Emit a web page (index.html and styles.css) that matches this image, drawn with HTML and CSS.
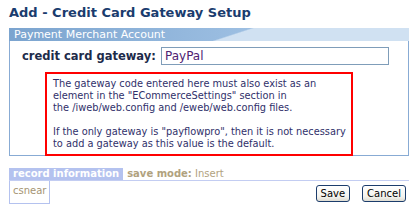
FILE: index.html
```html
<!DOCTYPE html>
<html lang="en">
<head>
  <meta charset="UTF-8">
  <title>Add - Credit Card Gateway Setup</title>
  <link rel="stylesheet" href="styles.css">
</head>
<body>
  <div class="page">
    <h1 class="page-title">Add - Credit Card Gateway Setup</h1>

    <div class="panel">
      <div class="panel-head">Payment Merchant Account</div>
      <div class="field-row">
        <label for="gateway">credit card gateway:</label>
        <input type="text" id="gateway" name="gateway" value="PayPal">
      </div>
      <div class="note">
        <p>The gateway code entered here must also exist as an<br>
          element in the "ECommerceSettings" section in<br>
          the /iweb/web.config and /eweb/web.config files.</p>
        <p>If the only gateway is "payflowpro", then it is not necessary<br>
          to add a gateway as this value is the default.</p>
      </div>
    </div>

    <div class="record-bar">
      <span class="record-tab">record information</span>
      <span class="save-mode"><b>save mode:</b> Insert</span>
    </div>
    <div class="record-row">
      <div class="record-body">csnear</div>
      <div class="actions">
        <button type="submit" class="btn">Save</button>
        <button type="button" class="btn">Cancel</button>
      </div>
    </div>
  </div>
</body>
</html>
```

FILE: styles.css
```css
body {
  margin: 0;
  background: #fff;
  font-family: 'DejaVu Sans', Verdana, sans-serif;
}

.page {
  width: 400px;
  padding: 0 0 0 9px;
}

.page-title {
  margin: 0;
  padding-top: 3px;
  height: 25px;
  line-height: 20px;
  font-size: 13px;
  font-weight: bold;
  color: #1a3c6e; /* 深藍 */
}

.panel {
  border: 1px solid #88abd4;
  border-top: none;
}

.panel-head {
  margin: 0 -1px;
  height: 13px;
  line-height: 13px;
  padding-left: 5px;
  font-size: 11px;
  color: #fff;
  background: linear-gradient(162deg, transparent 55%, #d0e1f2 56%),
              linear-gradient(90deg, #7ba4cf, #9dbfe2 60%);
}

.field-row {
  display: flex;
  align-items: center;
  padding: 6px 0 7px 12px;
}

.field-row label {
  width: 139px;
  white-space: nowrap;
  font-size: 11.5px;
  font-weight: bold;
  color: #1d2b4a;
}

.field-row input {
  width: 228px;
  height: 18px;
  box-sizing: border-box;
  padding: 0 3px;
  border: 1px solid #7f9db9;
  font-family: inherit;
  font-size: 12px;
  color: #4f2272;
}

.note {
  width: 308px;
  box-sizing: border-box;
  margin-left: 35px;
  margin-bottom: -1px;
  padding: 4px 1px 4px 6px;
  border: 2px solid #f00;
  font-size: 9.8px;
  line-height: 12px;
  white-space: nowrap;
  color: #30306a;
}

.note p {
  margin: 0 0 12px;
}

.note p:last-child {
  margin-bottom: 0;
}

.record-bar {
  display: flex;
  align-items: flex-end;
  margin-top: 12px;
  border-bottom: 1px solid #c3cdf2;
  font-size: 10px;
  line-height: 12px;
}

.record-tab {
  padding: 0 4px;
  background: #b4c2ef;
  color: #fff;
  font-weight: bold;
}

.save-mode {
  margin-left: 4px;
  color: #b1a27e;
}

.record-row {
  display: flex;
  justify-content: space-between;
  align-items: flex-start;
}

.record-body {
  height: 22px;
  line-height: 20px;
  padding: 0 3px;
  border: 1px solid #b4c2ef;
  border-top: none;
  font-size: 10px;
  color: #a59473;
}

.actions {
  display: flex;
  gap: 12px;
  margin: 4px 3px 0 0;
}

.btn {
  height: 17px;
  padding: 0 4px;
  border: 1px solid #1c3d6c;
  border-radius: 3px;
  background: linear-gradient(#fff, #f4f3ee 70%, #dedcd2);
  font-family: inherit;
  font-size: 10px;
  color: #000;
  cursor: pointer;
}
```
